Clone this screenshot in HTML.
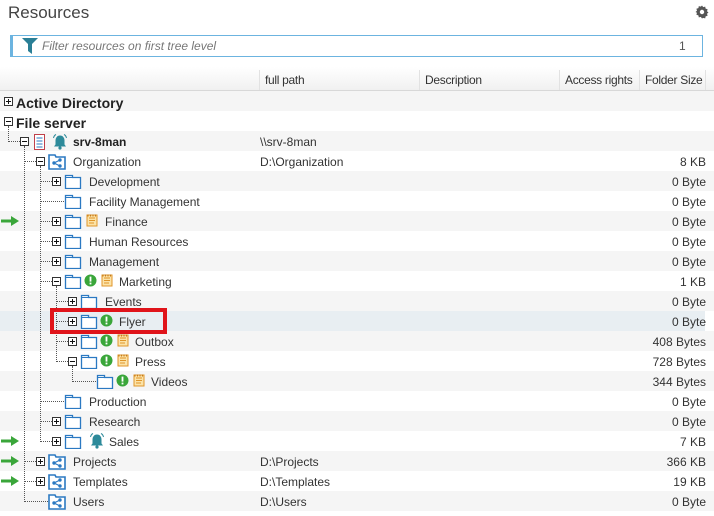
<!DOCTYPE html>
<html><head><meta charset="utf-8"><style>
*{margin:0;padding:0;box-sizing:border-box}
body{width:714px;height:516px;background:#fff;font-family:"Segoe UI","Liberation Sans",sans-serif;font-size:12px;color:#333;position:relative;overflow:hidden}
.a{position:absolute}
.row{position:absolute;left:0;width:714px;height:20px}
.g{background:#f5f5f5}
.t{position:absolute;line-height:20px;white-space:nowrap;margin-top:1px}
.sz{position:absolute;right:8px;line-height:20px;margin-top:1px}
.vl{position:absolute;width:0;border-left:1px dotted #555}
.hl{position:absolute;height:0;border-top:1px dotted #555}
.ex{position:absolute;width:9px;height:9px;border:1px solid #333;background:#fff}
.ex:before{content:"";position:absolute;left:1px;top:3px;width:5px;height:1px;background:#111}
.ex.p:after{content:"";position:absolute;left:3px;top:1px;width:1px;height:5px;background:#111}
svg{position:absolute}
.hd{position:absolute;top:70px;height:20px;line-height:20px;border-left:1px solid #e2e2e2;padding-left:5px;letter-spacing:-0.3px;white-space:nowrap;overflow:hidden}
</style></head><body>
<svg width="0" height="0" style="position:absolute">
<defs>
<symbol id="fo" viewBox="0 0 18 16"><path d="M1.5 2.5h7v2h8v11h-15z" fill="#fff" stroke="#2b79c2" stroke-width="1.3"/><path d="M1.5 4.5h15" stroke="#2b79c2" stroke-width="1"/></symbol>
<symbol id="ok" viewBox="0 0 13 13"><circle cx="6.5" cy="6.5" r="6" fill="#3aa63a"/><rect x="5.6" y="2.6" width="1.8" height="5" fill="#fff"/><rect x="5.6" y="8.6" width="1.8" height="1.8" fill="#fff"/></symbol>
<symbol id="nt" viewBox="0 0 12 13"><rect x="1" y="1" width="10" height="11" fill="#fbe3a8" stroke="#e0962a"/><path d="M3 4h6M3 6.5h6M3 9h5" stroke="#e0962a"/><path d="M2 0.5v2M4.5 0.5v2M7 0.5v2M9.5 0.5v2" stroke="#c47a1a"/></symbol>
<symbol id="sh" viewBox="0 0 18 17"><path d="M1 2h6l1 2h9v12H1z" fill="#fff" stroke="#2b79c2" stroke-width="1.6"/><circle cx="6" cy="10" r="1.7" fill="#2b79c2"/><circle cx="12" cy="7" r="1.7" fill="#2b79c2"/><circle cx="12" cy="13" r="1.7" fill="#2b79c2"/><path d="M6 10L12 7M6 10l6 3" stroke="#2b79c2" stroke-width="1.2"/></symbol>
<symbol id="bl" viewBox="0 0 14 16"><path d="M7 1.5c-3 0-4.5 2.5-4.5 5v4L1 12.5h12L11.5 10.5v-4c0-2.5-1.5-5-4.5-5z" fill="#2d8a9a"/><circle cx="7" cy="14" r="1.6" fill="#2d8a9a"/><path d="M0.5 4Q1 1.5 3 0.5M13.5 4Q13 1.5 11 0.5" stroke="#2d8a9a" fill="none"/></symbol>
<symbol id="ar" viewBox="0 0 18 10"><path d="M0 3.5h10V0l8 5-8 5V6.5H0z" fill="#3aa63a"/></symbol>
</defs></svg>

<div class="a" style="left:8px;top:3px;font-size:17px;color:#444">Resources</div>
<svg style="left:695px;top:5px" width="14" height="14" viewBox="0 0 14 14"><path d="M7 0.5l1.2 1.6 2-.5.4 2 2 .6-.6 2 1.5 1.3-1.5 1.3.6 2-2 .6-.4 2-2-.5L7 13.5l-1.2-1.6-2 .5-.4-2-2-.6.6-2L.5 7 2 5.7l-.6-2 2-.6.4-2 2 .5z" fill="#555"/><circle cx="7" cy="7" r="2.2" fill="#fff"/></svg>
<div class="a" style="left:10px;top:35px;width:693px;height:22px;border:1px solid #6cb4e0;border-left:3px solid #6cb4e0"></div>
<svg style="left:22px;top:37px" width="16" height="17" viewBox="0 0 16 17"><path d="M0 1h16L10 7v10l-4-3V7z" fill="#2a7f96"/></svg>
<div class="a" style="left:42px;top:38px;font-style:italic;color:#777;line-height:16px">Filter resources on first tree level</div>
<div class="a" style="left:679px;top:38px;color:#555;line-height:16px">1</div>

<div class="a" style="left:0;top:67px;width:714px;height:24px;background:linear-gradient(#fff,#f0f0f0);border-bottom:1px solid #d8d8d8"></div>
<div class="hd" style="left:259px;width:160px">full path</div>
<div class="hd" style="left:419px;width:140px">Description</div>
<div class="hd" style="left:559px;width:80px">Access rights</div>
<div class="hd" style="left:639px;width:66px">Folder Size</div>
<div class="hd" style="left:705px"></div>

<div class="row g" style="top:91px"></div>
<div class="row g" style="top:131px"></div>
<div class="row g" style="top:171px"></div>
<div class="row g" style="top:211px"></div>
<div class="row g" style="top:251px"></div>
<div class="row g" style="top:291px"></div>
<div class="row" style="top:311px;background:#e8eef2;width:705px"></div>
<div class="row g" style="top:331px"></div>
<div class="row g" style="top:371px"></div>
<div class="row g" style="top:411px"></div>
<div class="row g" style="top:451px"></div>
<div class="row g" style="top:491px"></div>

<div class="vl" style="left:8px;top:126px;height:16px"></div>
<div class="hl" style="left:8px;top:141px;width:12px"></div>
<div class="vl" style="left:24px;top:146px;height:356px"></div>
<div class="vl" style="left:40px;top:166px;height:276px"></div>
<div class="vl" style="left:56px;top:286px;height:76px"></div>
<div class="vl" style="left:72px;top:366px;height:16px"></div>
<div class="hl" style="left:24px;top:161px;width:12px"></div>
<div class="hl" style="left:24px;top:461px;width:12px"></div>
<div class="hl" style="left:24px;top:481px;width:12px"></div>
<div class="hl" style="left:24px;top:501px;width:24px"></div>
<div class="hl" style="left:40px;top:181px;width:12px"></div>
<div class="hl" style="left:40px;top:201px;width:24px"></div>
<div class="hl" style="left:40px;top:221px;width:12px"></div>
<div class="hl" style="left:40px;top:241px;width:12px"></div>
<div class="hl" style="left:40px;top:261px;width:12px"></div>
<div class="hl" style="left:40px;top:281px;width:12px"></div>
<div class="hl" style="left:40px;top:401px;width:24px"></div>
<div class="hl" style="left:40px;top:421px;width:12px"></div>
<div class="hl" style="left:40px;top:441px;width:12px"></div>
<div class="hl" style="left:56px;top:301px;width:12px"></div>
<div class="hl" style="left:56px;top:321px;width:12px"></div>
<div class="hl" style="left:56px;top:341px;width:12px"></div>
<div class="hl" style="left:56px;top:361px;width:12px"></div>
<div class="hl" style="left:72px;top:381px;width:24px"></div>

<div class="ex p" style="left:4px;top:97px"></div>
<div class="ex" style="left:4px;top:117px"></div>
<div class="ex" style="left:20px;top:137px"></div>
<div class="ex" style="left:36px;top:157px"></div>
<div class="ex p" style="left:52px;top:177px"></div>
<div class="ex p" style="left:52px;top:217px"></div>
<div class="ex p" style="left:52px;top:237px"></div>
<div class="ex p" style="left:52px;top:257px"></div>
<div class="ex" style="left:52px;top:277px"></div>
<div class="ex p" style="left:68px;top:297px"></div>
<div class="ex p" style="left:68px;top:317px"></div>
<div class="ex p" style="left:68px;top:337px"></div>
<div class="ex" style="left:68px;top:357px"></div>
<div class="ex p" style="left:52px;top:417px"></div>
<div class="ex p" style="left:52px;top:437px"></div>
<div class="ex p" style="left:36px;top:457px"></div>
<div class="ex p" style="left:36px;top:477px"></div>

<div class="t" style="left:16px;top:92px;font-weight:bold;font-size:14px;color:#222">Active Directory</div>
<div class="t" style="left:16px;top:112px;font-weight:bold;font-size:14px;color:#222">File server</div>

<svg style="left:34px;top:134px" width="11" height="16" viewBox="0 0 11 16"><rect x="0.5" y="0.5" width="10" height="15" fill="#fff" stroke="#c0404a"/><path d="M2.5 4h6M2.5 7h6M2.5 10h6M2.5 13h6" stroke="#2b79c2"/></svg>
<svg style="left:53px;top:134px" width="14" height="16"><use href="#bl"/></svg>
<div class="t" style="left:73px;top:131px;font-weight:bold;color:#222">srv-8man</div><div class="t" style="left:260px;top:131px">\\srv-8man</div>

<svg style="left:48px;top:153px" width="18" height="17"><use href="#sh"/></svg>
<div class="t" style="left:73px;top:151px">Organization</div><div class="t" style="left:260px;top:151px">D:\Organization</div><div class="sz" style="top:151px">8 KB</div>

<svg style="left:64px;top:173px" width="18" height="16"><use href="#fo"/></svg><div class="t" style="left:89px;top:171px">Development</div><div class="sz" style="top:171px">0 Byte</div>
<svg style="left:64px;top:193px" width="18" height="16"><use href="#fo"/></svg><div class="t" style="left:89px;top:191px">Facility Management</div><div class="sz" style="top:191px">0 Byte</div>
<svg style="left:64px;top:213px" width="18" height="16"><use href="#fo"/></svg><svg style="left:86px;top:214px" width="12" height="13"><use href="#nt"/></svg><div class="t" style="left:105px;top:211px">Finance</div><div class="sz" style="top:211px">0 Byte</div>
<svg style="left:64px;top:233px" width="18" height="16"><use href="#fo"/></svg><div class="t" style="left:89px;top:231px">Human Resources</div><div class="sz" style="top:231px">0 Byte</div>
<svg style="left:64px;top:253px" width="18" height="16"><use href="#fo"/></svg><div class="t" style="left:89px;top:251px">Management</div><div class="sz" style="top:251px">0 Byte</div>
<svg style="left:64px;top:273px" width="18" height="16"><use href="#fo"/></svg><svg style="left:84px;top:274px" width="13" height="13"><use href="#ok"/></svg><svg style="left:101px;top:274px" width="12" height="13"><use href="#nt"/></svg><div class="t" style="left:119px;top:271px">Marketing</div><div class="sz" style="top:271px">1 KB</div>
<svg style="left:80px;top:293px" width="18" height="16"><use href="#fo"/></svg><div class="t" style="left:105px;top:291px">Events</div><div class="sz" style="top:291px">0 Byte</div>
<svg style="left:80px;top:313px" width="18" height="16"><use href="#fo"/></svg><svg style="left:100px;top:314px" width="13" height="13"><use href="#ok"/></svg><div class="t" style="left:119px;top:311px">Flyer</div><div class="sz" style="top:311px">0 Byte</div>
<svg style="left:80px;top:333px" width="18" height="16"><use href="#fo"/></svg><svg style="left:100px;top:334px" width="13" height="13"><use href="#ok"/></svg><svg style="left:117px;top:334px" width="12" height="13"><use href="#nt"/></svg><div class="t" style="left:135px;top:331px">Outbox</div><div class="sz" style="top:331px">408 Bytes</div>
<svg style="left:80px;top:353px" width="18" height="16"><use href="#fo"/></svg><svg style="left:100px;top:354px" width="13" height="13"><use href="#ok"/></svg><svg style="left:117px;top:354px" width="12" height="13"><use href="#nt"/></svg><div class="t" style="left:135px;top:351px">Press</div><div class="sz" style="top:351px">728 Bytes</div>
<svg style="left:96px;top:373px" width="18" height="16"><use href="#fo"/></svg><svg style="left:116px;top:374px" width="13" height="13"><use href="#ok"/></svg><svg style="left:133px;top:374px" width="12" height="13"><use href="#nt"/></svg><div class="t" style="left:151px;top:371px">Videos</div><div class="sz" style="top:371px">344 Bytes</div>
<svg style="left:64px;top:393px" width="18" height="16"><use href="#fo"/></svg><div class="t" style="left:89px;top:391px">Production</div><div class="sz" style="top:391px">0 Byte</div>
<svg style="left:64px;top:413px" width="18" height="16"><use href="#fo"/></svg><div class="t" style="left:89px;top:411px">Research</div><div class="sz" style="top:411px">0 Byte</div>
<svg style="left:64px;top:433px" width="18" height="16"><use href="#fo"/></svg><svg style="left:90px;top:433px" width="14" height="16"><use href="#bl"/></svg><div class="t" style="left:109px;top:431px">Sales</div><div class="sz" style="top:431px">7 KB</div>
<svg style="left:48px;top:453px" width="18" height="17"><use href="#sh"/></svg><div class="t" style="left:73px;top:451px">Projects</div><div class="t" style="left:260px;top:451px">D:\Projects</div><div class="sz" style="top:451px">366 KB</div>
<svg style="left:48px;top:473px" width="18" height="17"><use href="#sh"/></svg><div class="t" style="left:73px;top:471px">Templates</div><div class="t" style="left:260px;top:471px">D:\Templates</div><div class="sz" style="top:471px">19 KB</div>
<svg style="left:48px;top:493px" width="18" height="17"><use href="#sh"/></svg><div class="t" style="left:73px;top:491px">Users</div><div class="t" style="left:260px;top:491px">D:\Users</div><div class="sz" style="top:491px">0 Byte</div>

<svg style="left:1px;top:216px" width="18" height="10"><use href="#ar"/></svg>
<svg style="left:1px;top:436px" width="18" height="10"><use href="#ar"/></svg>
<svg style="left:1px;top:456px" width="18" height="10"><use href="#ar"/></svg>
<svg style="left:1px;top:476px" width="18" height="10"><use href="#ar"/></svg>

<div class="a" style="left:50px;top:308px;width:117px;height:26px;border:4px solid #e0141a"></div>
</body></html>
